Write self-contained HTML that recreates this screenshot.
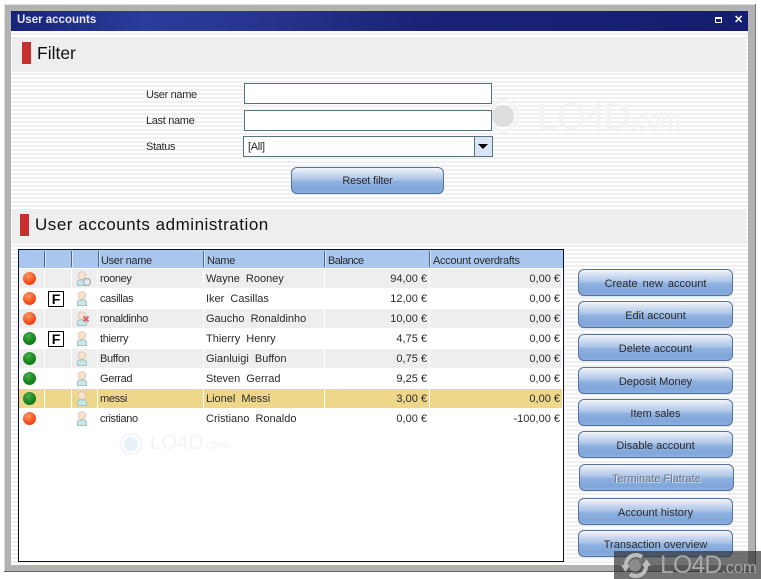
<!DOCTYPE html>
<html><head><meta charset="utf-8"><style>
html,body{margin:0;padding:0;background:#fff}
#p{position:relative;width:761px;height:579px;overflow:hidden;background:#fff;font-family:"Liberation Sans",sans-serif;font-size:11px;color:#2b2b2b}
#p div{position:absolute;white-space:nowrap}
.t{line-height:14px;height:14px}
.n{letter-spacing:-.33px}
.m{letter-spacing:-.35px}
.r{text-align:right}
.b{border:1px solid #557399;border-radius:6px;box-sizing:border-box;background:linear-gradient(#f4f6fb 0,#cfdcf1 22%,#adc5e8 46%,#8fb1e0 54%,#80a6da 85%,#8cafdf 100%);text-align:center;line-height:28px;width:155px;height:27px;box-shadow:0 1px 0 #e4e8ee}
.l{background:#fff;border:1px solid #55757f;box-sizing:border-box}
.c{width:13px;height:13px;border-radius:50%;left:23px}
.red{background:radial-gradient(circle at 40% 30%,#ff9a66,#f4501c 55%,#d8380f)}
.grn{background:radial-gradient(circle at 40% 30%,#4dad4d,#14861e 55%,#0a6a14)}
.f{left:48px;width:14px;height:14px;border:1px solid #000;background:#fff;font:bold 14px/14px "Liberation Sans",sans-serif;color:#000;text-align:center}
.s{width:1px;background:#fff}
.hs{width:1px;top:251px;height:16px;background:#48688f;box-shadow:1px 0 0 #dbe7f7}
</style></head><body><div id="p">
<div style="left:4px;top:4px;width:751px;height:567px;background:#b2b2b2;border-top:1px solid #ddd;border-left:1px solid #ddd;box-sizing:border-box"></div>
<div style="left:4px;top:571px;width:751px;height:1px;background:#666"></div>
<div style="left:755px;top:4px;width:1px;height:568px;background:#777"></div>
<div style="left:11px;top:11px;width:737px;height:554px;background:repeating-linear-gradient(#fff 0,#fff 2px,#f0f0f2 2px,#f0f0f2 4px)"></div>
<div style="left:11px;top:11px;width:737px;height:20px;background:linear-gradient(90deg,#17237a 0,#2a3c9c 18%,#26348f 35%,#1a2378 55%,#141d70 100%)"></div>
<div style="left:17px;top:13px;color:#e8e8f4;font:bold 11.5px/15px 'Liberation Sans',sans-serif">User accounts</div>
<div style="left:715px;top:17px;width:7px;height:6px;border:1px solid #fff;border-top-width:2px;box-sizing:border-box"></div>
<div style="left:734px;top:13px;color:#fff;font:bold 11px/15px 'Liberation Sans',sans-serif">✕</div>

<div style="left:12px;top:37px;width:734px;height:35px;background:#eee"></div>
<div style="left:22px;top:42px;width:9px;height:22px;background:#c8302f"></div>
<div style="left:37px;top:43px;font-size:17.5px;line-height:20px;color:#111">Filter</div>
<div class="t n" style="left:146px;top:88px">User name</div>
<div class="t n" style="left:146px;top:114px">Last name</div>
<div class="t n" style="left:146px;top:140px">Status</div>

<div style="left:478px;top:98px;width:50px;height:36px"><svg width="50" height="36" viewBox="0 0 50 36"><circle cx="25" cy="18" r="15" fill="none" stroke="#f4f4f4" stroke-width="4"/><circle cx="25" cy="18" r="11" fill="#dedede"/></svg></div>
<div style="left:537px;top:98px;font-size:37px;line-height:38px;color:#f3f3f5;letter-spacing:-1px">LO4D<span style="font-size:25px">.com</span></div>

<div class="l" style="left:244px;top:83px;width:248px;height:21px"></div>
<div class="l" style="left:244px;top:110px;width:248px;height:21px"></div>
<div class="l" style="left:243px;top:136px;width:250px;height:21px"></div>
<div class="t n" style="left:248px;top:140px">[All]</div>
<div style="left:474px;top:137px;width:18px;height:19px;background:#d9e5f7;border-left:1px solid #55757f;box-sizing:border-box"></div>
<div style="left:478px;top:144px;width:0;height:0;border:5px solid transparent;border-top:5px solid #000;border-bottom:0"></div>
<div class="b" style="left:291px;top:167px;width:153px;line-height:27px;letter-spacing:-.2px">Reset filter</div>

<div style="left:12px;top:209px;width:734px;height:35px;background:#eee"></div>
<div style="left:20px;top:214px;width:9px;height:22px;background:#c8302f"></div>
<div style="left:35px;top:215px;font-size:17px;line-height:20px;letter-spacing:.52px;color:#111">User accounts administration</div>

<div style="left:18px;top:249px;width:546px;height:313px;background:#fff;border:1px solid #0a1030;box-sizing:border-box"></div>
<div style="left:19px;top:250px;width:544px;height:18px;background:#a9c7ee"></div>
<div class="hs" style="left:44px"></div><div class="hs" style="left:71px"></div><div class="hs" style="left:98px"></div><div class="hs" style="left:203px"></div><div class="hs" style="left:324px"></div><div class="hs" style="left:429px"></div>
<div class="t n" style="left:101px;top:254px">User name</div>
<div class="t n" style="left:207px;top:254px">Name</div>
<div class="t" style="left:328px;top:254px;letter-spacing:-.6px">Balance</div>
<div class="t" style="left:433px;top:254px;letter-spacing:-.28px">Account overdrafts</div>

<div style="left:19px;top:269px;width:543px;height:19px;background:#eee"></div>
<div style="left:19px;top:309px;width:543px;height:19px;background:#eee"></div>
<div style="left:19px;top:349px;width:543px;height:19px;background:#eee"></div>
<div style="left:19px;top:389px;width:543px;height:19px;background:#efd789"></div>
<div class="s" style="left:44px;top:269px;height:139px"></div>
<div class="s" style="left:71px;top:269px;height:139px"></div>
<div class="s" style="left:97px;top:269px;height:139px"></div>
<div class="s" style="left:203px;top:269px;height:139px"></div>
<div class="s" style="left:324px;top:269px;height:139px"></div>
<div class="s" style="left:429px;top:269px;height:139px"></div>

<div class="c red" style="top:272px"></div>
<div class="c red" style="top:292px"></div>
<div class="c red" style="top:312px"></div>
<div class="c grn" style="top:332px"></div>
<div class="c grn" style="top:352px"></div>
<div class="c grn" style="top:372px"></div>
<div class="c grn" style="top:392px"></div>
<div class="c red" style="top:412px"></div>
<div class="f" style="top:291px">F</div>
<div class="f" style="top:331px">F</div>

<svg style="position:absolute;left:0;top:0" width="761" height="579">
<defs><g id="us"><circle cx="6" cy="4.500" r="3.800" fill="#f8e2d0" stroke="#dcc8b8"/><path d="M1.500 14.500V11.500Q1.500 9 4 9H8Q10.500 9 10.500 11.500V14.500Z" fill="#c8e6e6" stroke="#a4c4c4"/></g></defs>
<use href="#us" x="76" y="271"/><circle cx="87" cy="282" r="3.500" fill="#e4e7ee" stroke="#9aa3b2"/>
<use href="#us" x="76" y="291"/>
<use href="#us" x="76" y="311"/><path d="M83.500 316.500l5 5m0-5l-5 5" stroke="#d8666a" stroke-width="2"/>
<use href="#us" x="76" y="331"/><use href="#us" x="76" y="351"/><use href="#us" x="76" y="371"/><use href="#us" x="76" y="391"/><use href="#us" x="76" y="411"/>
</svg>

<div class="t m" style="left:100px;top:272px">rooney</div><div class="t" style="left:206px;top:272px;word-spacing:3px">Wayne Rooney</div>
<div class="t m" style="left:100px;top:292px">casillas</div><div class="t" style="left:206px;top:292px;word-spacing:3px">Iker Casillas</div>
<div class="t m" style="left:100px;top:312px">ronaldinho</div><div class="t" style="left:206px;top:312px;word-spacing:3px">Gaucho Ronaldinho</div>
<div class="t m" style="left:100px;top:332px">thierry</div><div class="t" style="left:206px;top:332px;word-spacing:3px">Thierry Henry</div>
<div class="t m" style="left:100px;top:352px">Buffon</div><div class="t" style="left:206px;top:352px;word-spacing:3px">Gianluigi Buffon</div>
<div class="t m" style="left:100px;top:372px">Gerrad</div><div class="t" style="left:206px;top:372px;word-spacing:3px">Steven Gerrad</div>
<div class="t m" style="left:100px;top:392px">messi</div><div class="t" style="left:206px;top:392px;word-spacing:3px">Lionel Messi</div>
<div class="t m" style="left:100px;top:412px">cristiano</div><div class="t" style="left:206px;top:412px;word-spacing:3px">Cristiano Ronaldo</div>

<div class="t r" style="left:330px;width:97px;top:272px">94,00 €</div><div class="t r" style="left:440px;width:120px;top:272px">0,00 €</div>
<div class="t r" style="left:330px;width:97px;top:292px">12,00 €</div><div class="t r" style="left:440px;width:120px;top:292px">0,00 €</div>
<div class="t r" style="left:330px;width:97px;top:312px">10,00 €</div><div class="t r" style="left:440px;width:120px;top:312px">0,00 €</div>
<div class="t r" style="left:330px;width:97px;top:332px">4,75 €</div><div class="t r" style="left:440px;width:120px;top:332px">0,00 €</div>
<div class="t r" style="left:330px;width:97px;top:352px">0,75 €</div><div class="t r" style="left:440px;width:120px;top:352px">0,00 €</div>
<div class="t r" style="left:330px;width:97px;top:372px">9,25 €</div><div class="t r" style="left:440px;width:120px;top:372px">0,00 €</div>
<div class="t r" style="left:330px;width:97px;top:392px">3,00 €</div><div class="t r" style="left:440px;width:120px;top:392px">0,00 €</div>
<div class="t r" style="left:330px;width:97px;top:412px">0,00 €</div><div class="t r" style="left:440px;width:120px;top:412px">-100,00 €</div>

<div style="left:118px;top:432px;width:26px;height:24px"><svg width="26" height="24"><circle cx="13" cy="12" r="10" fill="none" stroke="#f5f7fa" stroke-width="3"/><circle cx="13" cy="12" r="7" fill="#e6f1f8"/></svg></div>
<div style="left:150px;top:431px;font-size:21px;line-height:24px;color:#f4f4f4;letter-spacing:-.5px">LO4D<span style="font-size:13px">.com</span></div>

<div class="b" style="left:578px;top:269px;word-spacing:2px">Create new account</div>
<div class="b" style="left:578px;top:301px">Edit account</div>
<div class="b" style="left:578px;top:334px">Delete account</div>
<div class="b" style="left:578px;top:367px">Deposit Money</div>
<div class="b" style="left:578px;top:399px">Item sales</div>
<div class="b" style="left:578px;top:431px">Disable account</div>
<div class="b" style="left:579px;top:464px;color:#6a7888;text-shadow:1px 1px 0 #d8e2f0">Terminate Flatrate</div>
<div class="b" style="left:578px;top:498px">Account history</div>
<div class="b" style="left:578px;top:530px">Transaction overview</div>

<div style="left:614px;top:551px;width:147px;height:28px;background:rgba(40,40,40,.65)"></div>
<svg style="position:absolute;left:620px;top:552px" width="32" height="27" viewBox="0 0 32 27"><path d="M6 14A10 10 0 0 1 22 5" fill="none" stroke="#bdbdbd" stroke-width="4"/><path d="M26 13A10 10 0 0 1 10 22" fill="none" stroke="#bdbdbd" stroke-width="4"/><path d="M1 13h9l-4.500 7zM31 14h-9l4.500-7z" fill="#bdbdbd"/><circle cx="15" cy="13.500" r="6" fill="#8c8c8c"/></svg>
<div style="left:660px;top:550px;font-size:25px;line-height:30px;letter-spacing:-1px;color:#a8a8a8">LO4D<span style="font-size:17px;letter-spacing:-.4px">.com</span></div>
</div></body></html>
